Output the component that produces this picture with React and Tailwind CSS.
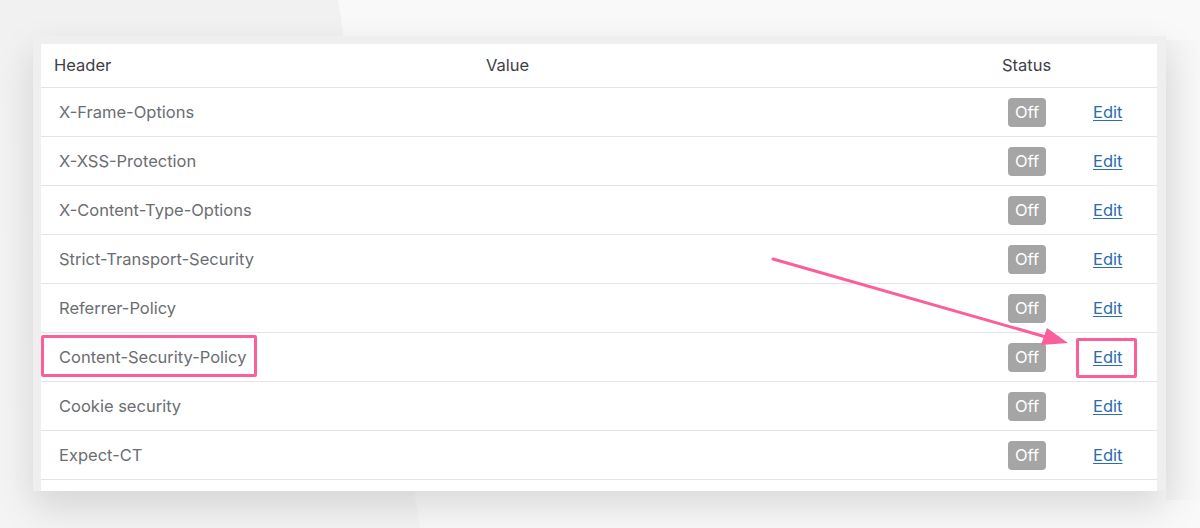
import * as React from "react";

const HEADERS = [
  "X-Frame-Options",
  "X-XSS-Protection",
  "X-Content-Type-Options",
  "Strict-Transport-Security",
  "Referrer-Policy",
  "Content-Security-Policy",
  "Cookie security",
  "Expect-CT",
];

const PINK = "#fb5f9b";

// Backdrop shapes behind the screenshot card
const Backdrop = () => (
  <svg className="absolute inset-0" width="1200" height="528" viewBox="0 0 1200 528">
    <defs>
      <linearGradient id="bgfade" x1="0" y1="0" x2="0" y2="1">
        <stop offset="0" stopColor="#f1f1f1" />
        <stop offset="1" stopColor="#f4f4f4" />
      </linearGradient>
      <linearGradient id="rightfade" x1="0" y1="0" x2="1" y2="0">
        <stop offset="0" stopColor="#ececec" />
        <stop offset="1" stopColor="#f7f7f7" />
      </linearGradient>
    </defs>
    <rect width="1200" height="528" fill="url(#bgfade)" />
    <polygon points="338,0 1200,0 1200,528 420,528" fill="#f9f9f9" />
    <rect x="1166" y="40" width="34" height="460" fill="url(#rightfade)" opacity="0.5" />
  </svg>
);

const Arrow = () => (
  <svg className="absolute left-0 top-0 pointer-events-none" width="1200" height="528" viewBox="0 0 1200 528">
    <line x1="773" y1="259" x2="1046" y2="337" stroke={PINK} strokeWidth="3" strokeLinecap="round" />
    <polygon points="1068,343 1041,345 1047,328" fill={PINK} />
  </svg>
);

const Row = ({ name }) => (
  <div className="grid grid-cols-[445px_516px_91px_1fr] items-center h-[49px] border-b border-[#e4e4e6]">
    <div className="pl-[18px] text-[#6b6e72]">{name}</div>
    <div />
    <div className="pl-[6px]">
      <span className="inline-flex items-center justify-center w-[38px] h-[29px] rounded-[4px] bg-[#a5a5a5] text-white">
        Off
      </span>
    </div>
    <div>
      <a href="#" className="text-[#2c6cb0] underline underline-offset-2">
        Edit
      </a>
    </div>
  </div>
);

export default function App() {
  return (
    <div
      className="relative w-[1200px] h-[528px] overflow-hidden text-[16.5px]"
      style={{ fontFamily: "Inter, 'Noto Sans', sans-serif" }}
    >
      <Backdrop />

      <div className="relative pt-[36px] pl-[33px]">
        <div className="w-[1133px] h-[455px] bg-[#efeff0] pt-[8px] pl-[8px] pr-[9px] overflow-hidden shadow-[0_16px_36px_rgba(0,0,0,0.13)]">
          <div className="bg-white h-full">
            {/* Table head */}
            <div className="grid grid-cols-[445px_516px_91px_1fr] items-center h-[44px] border-b border-[#e4e4e6] text-[#3d4045]">
              <div className="pl-[13px]">Header</div>
              <div>Value</div>
              <div>Status</div>
              <div />
            </div>
            {HEADERS.map((h) => (
              <Row key={h} name={h} />
            ))}
          </div>
        </div>
      </div>

      {/* Annotations */}
      <div className="absolute left-[41px] top-[335px] w-[216px] h-[42px] border-[3px] rounded-[2px]" style={{ borderColor: PINK }} />
      <div className="absolute left-[1076px] top-[338px] w-[61px] h-[40px] border-[3px] rounded-[2px]" style={{ borderColor: PINK }} />
      <Arrow />
    </div>
  );
}
